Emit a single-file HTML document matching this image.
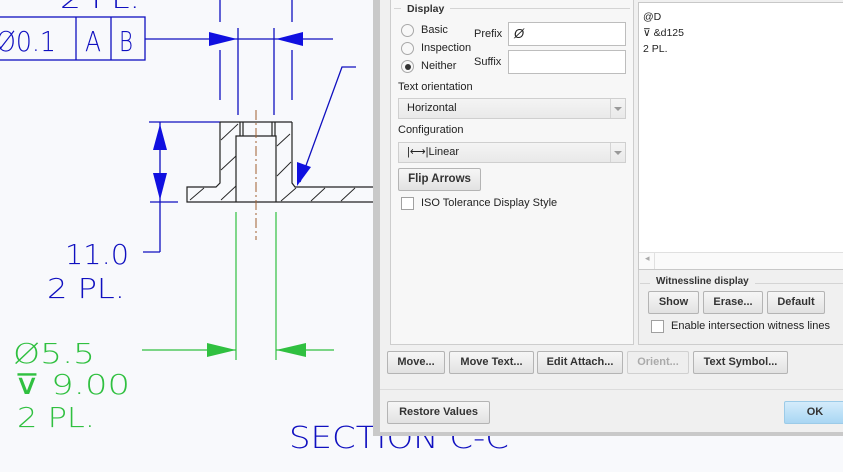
<!DOCTYPE html>
<html><head><meta charset="utf-8"><style>
*{box-sizing:border-box;margin:0;padding:0}
body{width:843px;height:472px;overflow:hidden;background:#f8f9fc;position:relative;font-family:"Liberation Sans",Arial,sans-serif;font-size:11px;color:#222}
.a{position:absolute}
.btn{position:absolute;height:23px;border:1px solid #b4b4b4;border-radius:2px;background:linear-gradient(#f6f6f6,#e2e2e2);font-weight:bold;font-size:11px;color:#333;text-align:center;line-height:21px}
.dd{position:absolute;left:398px;width:228px;height:21px;border:1px solid #cfcfcf;background:linear-gradient(#f4f4f4,#e9e9e9);padding-left:8px;line-height:19px;font-size:11px}
.dd:after{content:"";position:absolute;right:0;top:0;width:14px;height:19px;border-left:1px solid #d4d4d4}
.dd i{position:absolute;right:3px;top:8px;border-left:4px solid transparent;border-right:4px solid transparent;border-top:4px solid #999;z-index:2}
.rad{position:absolute;width:13px;height:13px;border:1px solid #a8a8a8;border-radius:50%;background:#f8f8f8}
.cb{position:absolute;width:13px;height:13px;border:1px solid #a0a0a0;background:#fff}
.inp{position:absolute;background:#fff;border:1px solid #bdbdbd}
svg text{font-family:"DejaVu Sans ExtraLight","DejaVu Sans","Liberation Sans",sans-serif;font-weight:200}
</style></head><body>
<svg class="a" style="left:0;top:0" width="843" height="472">
<g stroke="#1010c0" stroke-width="1.3" fill="none">
<text x="60" y="8" fill="#1010c0" stroke="none" font-size="26" textLength="80" lengthAdjust="spacingAndGlyphs">2 PL.</text>
<rect x="-5" y="17" width="150" height="43"/>
<line x1="76" y1="17" x2="76" y2="60"/><line x1="111" y1="17" x2="111" y2="60"/>
<line x1="145" y1="39" x2="333" y2="39"/>
<line x1="220" y1="0" x2="220" y2="22"/><line x1="220" y1="50" x2="220" y2="100"/>
<line x1="292" y1="0" x2="292" y2="22"/><line x1="292" y1="50" x2="292" y2="100"/>
<line x1="238" y1="28" x2="238" y2="115"/><line x1="274" y1="28" x2="274" y2="115"/>
<line x1="149" y1="122" x2="220" y2="122"/>
<line x1="160" y1="122" x2="160" y2="252"/>
<line x1="150" y1="202" x2="178" y2="202"/>
<polyline points="143,252 160,252"/>
<polyline points="356,67 342,67 300,182"/>
</g>
<g fill="#1010e0">
<polygon points="209,32 209,46 237,39"/>
<polygon points="303,32 303,46 276,39"/>
<polygon points="160,124 153,150 167,150"/>
<polygon points="160,200 153,173 167,173"/>
<polygon points="297,186 297,162 311,167"/>
</g>
<g fill="#1010c0" font-size="28">
<text x="-4" y="51" textLength="60" lengthAdjust="spacingAndGlyphs">Ø0.1</text>
<text x="85" y="51" textLength="16" lengthAdjust="spacingAndGlyphs">A</text><text x="119" y="51" textLength="14" lengthAdjust="spacingAndGlyphs">B</text>
<text x="65" y="264" textLength="64" lengthAdjust="spacingAndGlyphs">11.0</text>
<text x="47" y="298" textLength="78" lengthAdjust="spacingAndGlyphs">2 PL.</text>
<text x="289" y="448" font-size="30" textLength="220" lengthAdjust="spacingAndGlyphs">SECTION C-C</text>
</g>
<g stroke="#222" stroke-width="1.2" fill="none">
<polyline points="220,122 292,122"/>
<polyline points="220,122 220,183 216,187 187,187 187,202 380,202"/>
<polyline points="292,122 292,183 295,187 380,187"/>
<polyline points="236,202 236,136 276,136 276,202"/>
<line x1="240" y1="122" x2="240" y2="136"/><line x1="243" y1="122" x2="243" y2="136"/>
<line x1="272" y1="122" x2="272" y2="136"/><line x1="275" y1="122" x2="275" y2="136"/>
<g stroke-width="0.9">
<line x1="221" y1="140" x2="238" y2="124"/><line x1="221" y1="170" x2="236" y2="156"/>
<line x1="221" y1="200" x2="236" y2="186"/><line x1="190" y1="200" x2="204" y2="188"/>
<line x1="277" y1="146" x2="290" y2="134"/><line x1="277" y1="176" x2="291" y2="162"/>
<line x1="281" y1="201" x2="296" y2="188"/><line x1="311" y1="201" x2="325" y2="188"/><line x1="341" y1="201" x2="355" y2="188"/>
</g>
</g>
<line x1="256" y1="110" x2="256" y2="240" stroke="#a06030" stroke-width="1" stroke-dasharray="10,3,2,3"/>
<g stroke="#30c040" stroke-width="1.2">
<line x1="236" y1="212" x2="236" y2="360"/><line x1="276" y1="212" x2="276" y2="360"/>
<line x1="142" y1="350" x2="236" y2="350"/><line x1="276" y1="350" x2="334" y2="350"/>
</g>
<g fill="#30c040" font-size="28">
<polygon points="207,343 207,357 236,350"/><polygon points="306,343 306,357 276,350"/>
<text x="13" y="363" textLength="82" lengthAdjust="spacingAndGlyphs">Ø5.5</text>
<text x="14" y="394" textLength="116" lengthAdjust="spacingAndGlyphs">⊽ 9.00</text>
<text x="17" y="427" textLength="78" lengthAdjust="spacingAndGlyphs">2 PL.</text>
</g>
</svg>

<div class="a" style="left:373px;top:-2px;width:480px;height:438px;background:#f0f0f0;border-left:7px solid #c9c9c9;border-bottom:4px solid #c9c9c9"></div>
<div class="a" style="left:390px;top:-1px;width:70px;height:3px;border:1px solid #c8c8c8;border-top:none;background:#f0f0f0"></div>
<div class="a" style="left:390px;top:0;width:244px;height:345px;border:1px solid #cdcdcd;border-top:none;background:#f7f7f7"></div>
<div class="a" style="left:394px;top:8px;width:236px;height:1px;background:#d4d4d4"></div>
<div class="a" style="left:401px;top:3px;padding:0 6px;background:#f7f7f7;font-weight:bold;font-size:10.5px;color:#333">Display</div>
<div class="rad" style="left:401px;top:24px"></div><div class="a" style="left:421px;top:24px">Basic</div>
<div class="rad" style="left:401px;top:42px"></div><div class="a" style="left:421px;top:42px">Inspection</div>
<div class="rad" style="left:401px;top:60px"></div><div class="a" style="left:405px;top:64px;width:6px;height:6px;border-radius:50%;background:#333"></div><div class="a" style="left:421px;top:60px">Neither</div>
<div class="a" style="left:474px;top:28px">Prefix</div>
<div class="a" style="left:474px;top:56px">Suffix</div>
<div class="inp" style="left:508px;top:22px;width:118px;height:24px;padding:3px 5px;font-size:13px;font-style:italic">Ø</div>
<div class="inp" style="left:508px;top:50px;width:118px;height:24px"></div>
<div class="a" style="left:398px;top:81px">Text orientation</div>
<div class="dd" style="top:98px">Horizontal<i></i></div>
<div class="a" style="left:398px;top:124px">Configuration</div>
<div class="dd" style="top:142px">|⟷|Linear<i></i></div>
<div class="btn" style="left:398px;top:168px;width:83px;font-size:11.5px">Flip Arrows</div>
<div class="cb" style="left:401px;top:197px"></div><div class="a" style="left:421px;top:197px">ISO Tolerance Display Style</div>
<div class="a" style="left:638px;top:2px;width:210px;height:268px;border:1px solid #c8c8c8;background:#fff"></div>
<div class="a" style="left:643px;top:9px;line-height:16px;font-size:10.5px">@D<br>⊽ &amp;d125<br>2 PL.</div>
<div class="a" style="left:639px;top:252px;width:210px;height:17px;border-top:1px solid #e0e0e0;background:#fafafa"></div>
<div class="a" style="left:654px;top:252px;width:1px;height:17px;background:#e0e0e0"></div>
<div class="a" style="left:645px;top:253px;font-size:9px;color:#aaa">◂</div>
<div class="a" style="left:638px;top:270px;width:210px;height:75px;border-left:1px solid #cdcdcd;border-bottom:1px solid #cdcdcd"></div>
<div class="a" style="left:640px;top:283px;width:210px;height:1px;background:#d4d4d4"></div>
<div class="a" style="left:650px;top:276px;padding:0 6px;background:#f0f0f0;font-weight:bold;font-size:10px;color:#333">Witnessline display</div>
<div class="btn" style="left:648px;top:291px;width:51px">Show</div>
<div class="btn" style="left:703px;top:291px;width:60px">Erase...</div>
<div class="btn" style="left:767px;top:291px;width:58px">Default</div>
<div class="cb" style="left:651px;top:320px"></div><div class="a" style="left:671px;top:320px">Enable intersection witness lines</div>
<div class="btn" style="left:387px;top:351px;width:58px">Move...</div>
<div class="btn" style="left:449px;top:351px;width:85px">Move Text...</div>
<div class="btn" style="left:537px;top:351px;width:86px">Edit Attach...</div>
<div class="btn" style="left:627px;top:351px;width:62px;color:#aaa;border-color:#d0d0d0;background:#eee">Orient...</div>
<div class="btn" style="left:693px;top:351px;width:95px">Text Symbol...</div>
<div class="a" style="left:380px;top:389px;width:470px;height:1px;background:#dcdcdc"></div>
<div class="btn" style="left:387px;top:401px;width:103px">Restore Values</div>
<div class="btn" style="left:784px;top:401px;width:62px;border-color:#9ccbe8;background:linear-gradient(#d4ecfb,#a9d6f3)">OK</div>
</body></html>
